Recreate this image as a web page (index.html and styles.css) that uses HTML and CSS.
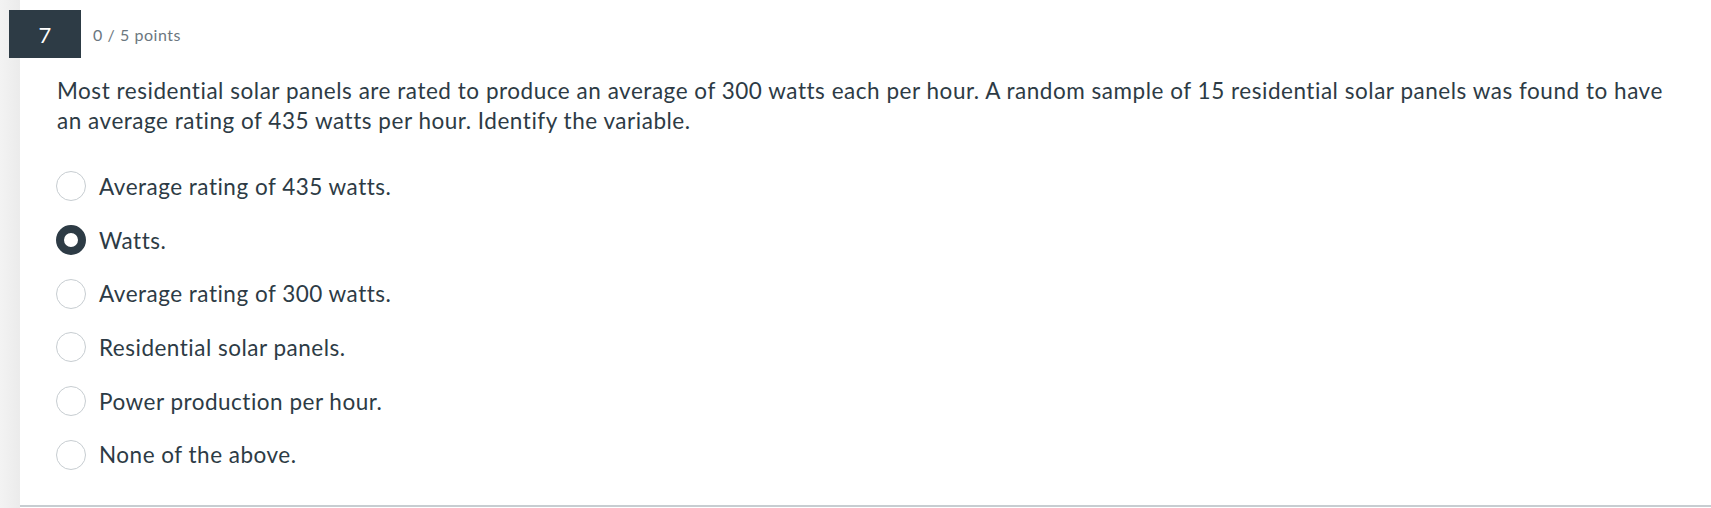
FILE: index.html
```html
<!DOCTYPE html>
<html lang="en">
<head>
<meta charset="utf-8">
<title>Question 7</title>
<link rel="stylesheet" href="styles.css">
</head>
<body>
<div class="page">
  <div class="card">
    <div class="header">
      <div class="badge">7</div>
      <div class="points">0 / 5 points</div>
    </div>
    <p class="question">Most residential solar panels are rated to produce an average of 300 watts each per hour. A random sample of 15 residential solar panels was found to have an average rating of 435 watts per hour. Identify the variable.</p>
    <ul class="options">
      <li class="option"><span class="radio"></span><span class="label">Average rating of 435 watts.</span></li>
      <li class="option"><span class="radio checked"></span><span class="label">Watts.</span></li>
      <li class="option"><span class="radio"></span><span class="label">Average rating of 300 watts.</span></li>
      <li class="option"><span class="radio"></span><span class="label">Residential solar panels.</span></li>
      <li class="option"><span class="radio"></span><span class="label">Power production per hour.</span></li>
      <li class="option"><span class="radio"></span><span class="label">None of the above.</span></li>
    </ul>
  </div>
</div>
</body>
</html>
```
FILE: styles.css
```css
html, body {
  margin: 0;
  padding: 0;
}
body {
  font-family: Lato, "Noto Sans", sans-serif;
  color: #2d3b45;
  background: #ffffff;
  font-variant-ligatures: none;
  font-feature-settings: "liga" 0, "clig" 0;
}
.page {
  height: 508px;
  padding-left: 20px;
  background: linear-gradient(to right, #f3f3f3 0, #ebebeb 20px, #ffffff 20px);
  box-sizing: border-box;
}
.card {
  background: #ffffff;
  height: 507px;
  border-bottom: 2px solid #c7cdd1;
  box-sizing: border-box;
  padding-left: 37px;
  padding-top: 10px;
}
.header {
  display: flex;
  align-items: center;
  margin-left: -48px;
  height: 48px;
}
.badge {
  width: 72px;
  height: 48px;
  background: #2d3b45;
  color: #ffffff;
  font-size: 22px;
  display: flex;
  align-items: center;
  justify-content: center;
}
.points {
  margin-left: 12px;
  font-size: 16px;
  letter-spacing: 0.55px;
  color: #6b7780;
}
.question {
  margin: 17.5px 0 0 0;
  font-size: 22.5px;
  letter-spacing: 0.53px;
  line-height: 30px;
  max-width: 1620px;
}
.options {
  list-style: none;
  margin: 24px 0 0 0;
  padding: 0;
}
.option {
  display: flex;
  align-items: center;
  height: 53.7px;
}
.radio {
  width: 30px;
  height: 30px;
  box-sizing: border-box;
  border-radius: 50%;
  border: 1px solid #c7cdd1;
  background: #ffffff;
  margin-left: -1px;
  flex: none;
}
.radio.checked {
  border: 8.5px solid #2d3b45;
}
.label {
  margin-left: 13px;
  font-size: 22.5px;
  letter-spacing: 0.5px;
}
```
